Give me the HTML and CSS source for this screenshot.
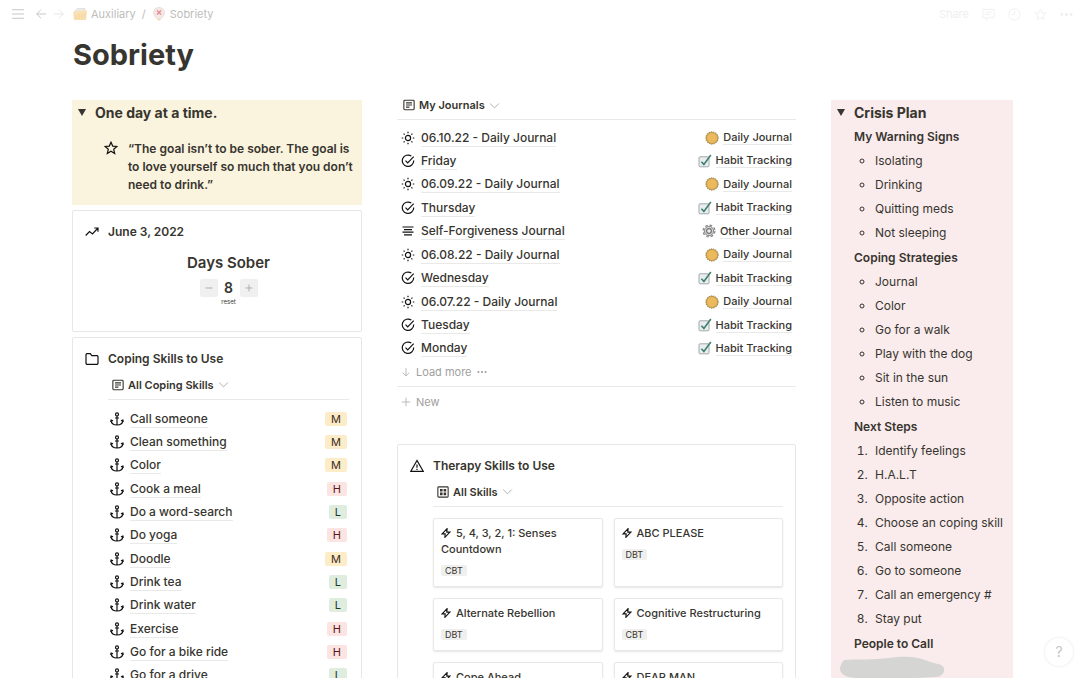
FILE: index.html
```
<!DOCTYPE html>
<html lang="en">
<head>
    <meta charset="UTF-8">
    <title>Sobriety</title>
    <link rel="stylesheet" href="styles.css">
</head>
<body>
<!-- icons -->
<svg class="defs" aria-hidden="true">
    <symbol id="i-anchor" viewBox="0 0 14 14">
        <circle cx="7" cy="2.400" r="1.500"/>
        <path d="M7 4v9M5 6h4M1 8.200c.2 3 2.600 4.700 6 4.800 3.400-.1 5.800-1.800 6-4.800M.6 9.800L1.100 8l1.900.9M13.400 9.800L12.900 8l-1.900.9"/>
    </symbol>
    <symbol id="i-sun" viewBox="0 0 14 14">
        <circle cx="7" cy="7" r="2.600"/>
        <path d="M7 .7v1.500M7 11.800v1.500M.7 7h1.500M11.800 7h1.500M2.600 2.600l1 1M10.400 10.400l1 1M2.600 11.400l1-1M10.400 3.600l1-1"/>
    </symbol>
    <symbol id="i-check" viewBox="0 0 14 14">
        <path d="M10.300 2.100A5.700 5.700 0 1 0 12.700 6.500M4.500 6.600l2.200 2.300 6-6.200"/>
    </symbol>
    <symbol id="i-lines" viewBox="0 0 14 14">
        <path d="M1.500 3h11M3 5.600h8M1.500 8.200h11M3 10.800h8"/>
    </symbol>
    <symbol id="i-bolt" viewBox="0 0 14 14">
        <path d="M8.500 1L1.500 8.200h4.300L5.500 13l7-7.200H8.200z"/>
    </symbol>
    <symbol id="i-list" viewBox="0 0 14 14">
        <rect x="1" y="1.500" width="12" height="11" rx="1"/>
        <path d="M3.500 4.500h7M3.500 7h7M3.500 9.500h4"/>
    </symbol>
    <symbol id="i-chevron" viewBox="0 0 14 14">
        <path d="M1.500 4.500L7 10l5.500-5.500"/>
    </symbol>
    <symbol id="i-star" viewBox="0 0 14 14">
        <path d="M7 1.200l1.700 3.900 4.200.4-3.200 2.800 1 4.200L7 10.300l-3.700 2.200 1-4.200L1.100 5.500l4.200-.4z"/>
    </symbol>
    <symbol id="i-day" viewBox="0 0 14 14">
        <circle cx="7" cy="7" r="6" fill="#ecb95d" stroke="#a9935f" stroke-width="1.400" stroke-dasharray="1.300 .9"/>
        <circle cx="7" cy="7" r="5.500" fill="#ecb95d" stroke="#b5924c" stroke-width=".8"/>
    </symbol>
    <symbol id="i-habit" viewBox="0 0 14 14">
        <rect x="1" y="2.800" width="10" height="10" rx="1" fill="#e9edef" stroke="#a3a8aa" stroke-width="1"/>
        <path d="M3.400 7.700l2.500 2.700L12.800 1" fill="none" stroke="#3f8070" stroke-width="1.600"/>
    </symbol>
    <symbol id="i-gear" viewBox="0 0 14 14">
        <circle cx="7" cy="7" r="5.900" fill="none" stroke="#858585" stroke-width="1.200" stroke-dasharray="2.600 2.030"/>
        <circle cx="7" cy="7" r="4.700" fill="#d2d2d2" stroke="#858585" stroke-width="1"/>
        <circle cx="7" cy="7" r="2.400" fill="#eee" stroke="#777" stroke-width="1.200"/>
    </symbol>
</svg>

<header class="topbar">
    <button class="bar-btn" aria-label="Menu"><svg viewBox="0 0 14 14"><path d="M0 2h14M0 7h14M0 12h14"/></svg></button>
    <button class="bar-btn back" aria-label="Back"><svg viewBox="0 0 14 14"><path d="M13 7H2M7 2L2 7l5 5"/></svg></button>
    <button class="bar-btn forward" aria-label="Forward"><svg viewBox="0 0 14 14"><path d="M1 7h11M7 2l5 5-5 5"/></svg></button>
    <nav class="crumbs">
        <a href="#">
            <svg viewBox="0 0 14 14"><path d="M1 5l3-3.500h8V6z" fill="#ececec" stroke="#d5d5d5" stroke-width=".6"/><path d="M0 5h3l1.500-1.500H14L13 13H1z" fill="#fae1b4"/><path d="M3 12V8M6 12V7M9 12V7M12 11V6" stroke="#f5d196" fill="none"/></svg>
            Auxiliary</a>
        <span>/</span>
        <a href="#">
            <svg viewBox="0 0 14 14"><path d="M7 13.500C4 11 1.500 8.500 1.500 5.500a5.500 5 0 0 1 11 0c0 3-2.500 5.500-5.500 8z" fill="#f3e9e6" stroke="#e3d9d8" stroke-width=".8"/><path d="M5 13l2-2 2 2z" fill="#f7dcae"/><circle cx="7" cy="5.500" r="3.600" fill="#fae5e5"/><path d="M5 3.500l4 4M9 3.500l-4 4" stroke="#df8f97" stroke-width="1.300"/></svg>
            Sobriety</a>
    </nav>
    <div class="actions">
        <button>Share</button>
        <button aria-label="Comments"><svg viewBox="0 0 14 14"><path d="M1 1.500h12v9H7l-2.500 2.500v-2.500H1zM3.500 4.500h7M3.500 7h5"/></svg></button>
        <button aria-label="Updates"><svg viewBox="0 0 14 14"><circle cx="7" cy="7" r="6"/><path d="M7 3v4H4"/></svg></button>
        <button aria-label="Favorite"><svg viewBox="0 0 14 14"><use href="#i-star"/></svg></button>
        <button aria-label="More"><svg viewBox="0 0 14 14"><path class="dots" d="M2 7h0M7 7h0M12 7h0"/></svg></button>
    </div>
</header>

<main>
    <h1>Sobriety</h1>
    <div class="columns">
        <!-- left column -->
        <div class="column">
            <details class="toggle yellow" open>
                <summary><h2>One day at a time.</h2></summary>
                <div class="quote">
                    <svg class="icon"><use href="#i-star"/></svg>
                    <p>“The goal isn’t to be sober. The goal is to love yourself so much that you don’t need to drink.”</p>
                </div>
            </details>

            <section class="callout counter">
                <svg class="icon" viewBox="0 0 14 14"><path d="M.7 10.500L4.500 6.500l3 2.500L13 3M9.300 3H13v3.700"/></svg>
                <div class="callout-body">
                    <h3>June 3, 2022</h3>
                    <h2>Days Sober</h2>
                    <div class="stepper">
                        <button aria-label="Decrease"><svg viewBox="0 0 14 14"><path d="M3 7h8"/></svg></button>
                        <output>8</output>
                        <button aria-label="Increase"><svg viewBox="0 0 14 14"><path d="M3 7h8M7 3v8"/></svg></button>
                    </div>
                    <button class="reset">reset</button>
                </div>
            </section>

            <section class="callout">
                <svg class="icon" viewBox="0 0 14 14"><path d="M1 11.500v-9l.7-.8h3.600l1.500 2h5.500l.7.8v7l-.7.8H1.700z"/></svg>
                <div class="callout-body">
                    <h3>Coping Skills to Use</h3>
                    <button class="view"><svg class="view-icon"><use href="#i-list"/></svg>All Coping Skills<svg class="chevron"><use href="#i-chevron"/></svg></button>
                    <ul class="rows skills">
                        <li><svg class="icon"><use href="#i-anchor"/></svg><a href="#">Call someone</a><span class="tag medium">M</span></li>
                        <li><svg class="icon"><use href="#i-anchor"/></svg><a href="#">Clean something</a><span class="tag medium">M</span></li>
                        <li><svg class="icon"><use href="#i-anchor"/></svg><a href="#">Color</a><span class="tag medium">M</span></li>
                        <li><svg class="icon"><use href="#i-anchor"/></svg><a href="#">Cook a meal</a><span class="tag high">H</span></li>
                        <li><svg class="icon"><use href="#i-anchor"/></svg><a href="#">Do a word-search</a><span class="tag low">L</span></li>
                        <li><svg class="icon"><use href="#i-anchor"/></svg><a href="#">Do yoga</a><span class="tag high">H</span></li>
                        <li><svg class="icon"><use href="#i-anchor"/></svg><a href="#">Doodle</a><span class="tag medium">M</span></li>
                        <li><svg class="icon"><use href="#i-anchor"/></svg><a href="#">Drink tea</a><span class="tag low">L</span></li>
                        <li><svg class="icon"><use href="#i-anchor"/></svg><a href="#">Drink water</a><span class="tag low">L</span></li>
                        <li><svg class="icon"><use href="#i-anchor"/></svg><a href="#">Exercise</a><span class="tag high">H</span></li>
                        <li><svg class="icon"><use href="#i-anchor"/></svg><a href="#">Go for a bike ride</a><span class="tag high">H</span></li>
                        <li><svg class="icon"><use href="#i-anchor"/></svg><a href="#">Go for a drive</a><span class="tag low">L</span></li>
                    </ul>
                </div>
            </section>
        </div>

        <!-- middle column -->
        <div class="column">
            <section class="journals">
                <button class="view"><svg class="view-icon"><use href="#i-list"/></svg>My Journals<svg class="chevron"><use href="#i-chevron"/></svg></button>
                <ul class="rows">
                    <li><svg class="icon"><use href="#i-sun"/></svg><a href="#">06.10.22 - Daily Journal</a><span class="relation"><svg><use href="#i-day"/></svg><a href="#">Daily Journal</a></span></li>
                    <li><svg class="icon"><use href="#i-check"/></svg><a href="#">Friday</a><span class="relation"><svg><use href="#i-habit"/></svg><a href="#">Habit Tracking</a></span></li>
                    <li><svg class="icon"><use href="#i-sun"/></svg><a href="#">06.09.22 - Daily Journal</a><span class="relation"><svg><use href="#i-day"/></svg><a href="#">Daily Journal</a></span></li>
                    <li><svg class="icon"><use href="#i-check"/></svg><a href="#">Thursday</a><span class="relation"><svg><use href="#i-habit"/></svg><a href="#">Habit Tracking</a></span></li>
                    <li><svg class="icon"><use href="#i-lines"/></svg><a href="#">Self-Forgiveness Journal</a><span class="relation"><svg><use href="#i-gear"/></svg><a href="#">Other Journal</a></span></li>
                    <li><svg class="icon"><use href="#i-sun"/></svg><a href="#">06.08.22 - Daily Journal</a><span class="relation"><svg><use href="#i-day"/></svg><a href="#">Daily Journal</a></span></li>
                    <li><svg class="icon"><use href="#i-check"/></svg><a href="#">Wednesday</a><span class="relation"><svg><use href="#i-habit"/></svg><a href="#">Habit Tracking</a></span></li>
                    <li><svg class="icon"><use href="#i-sun"/></svg><a href="#">06.07.22 - Daily Journal</a><span class="relation"><svg><use href="#i-day"/></svg><a href="#">Daily Journal</a></span></li>
                    <li><svg class="icon"><use href="#i-check"/></svg><a href="#">Tuesday</a><span class="relation"><svg><use href="#i-habit"/></svg><a href="#">Habit Tracking</a></span></li>
                    <li><svg class="icon"><use href="#i-check"/></svg><a href="#">Monday</a><span class="relation"><svg><use href="#i-habit"/></svg><a href="#">Habit Tracking</a></span></li>
                </ul>
                <button class="more"><svg viewBox="0 0 14 14"><path d="M7 1.500v11M2.500 8L7 12.500 11.500 8"/></svg>Load more<svg viewBox="0 0 14 14"><path class="dots" d="M2 7h0M7 7h0M12 7h0"/></svg></button>
                <button class="more new"><svg viewBox="0 0 14 14"><path d="M7 1v12M1 7h12"/></svg>New</button>
            </section>

            <section class="callout">
                <svg class="icon" viewBox="0 0 14 14"><path d="M7 1.500L.8 12.300h12.400zM7 5.500v3.200M7 9.800v1.200"/></svg>
                <div class="callout-body">
                    <h3>Therapy Skills to Use</h3>
                    <button class="view"><svg class="view-icon" viewBox="0 0 14 14"><rect x="1" y="1" width="12" height="12" rx="1"/><path class="solid" d="M3.500 3.500h3v3h-3zM7.700 3.500h3v3h-3zM3.500 7.700h3v3h-3zM7.700 7.700h3v3h-3z"/></svg>All Skills<svg class="chevron"><use href="#i-chevron"/></svg></button>
                    <div class="gallery">
                        <article>
                            <h4><svg><use href="#i-bolt"/></svg>5, 4, 3, 2, 1: Senses Countdown</h4>
                            <span class="type">CBT</span>
                        </article>
                        <article>
                            <h4><svg><use href="#i-bolt"/></svg>ABC PLEASE</h4>
                            <span class="type">DBT</span>
                        </article>
                        <article>
                            <h4><svg><use href="#i-bolt"/></svg>Alternate Rebellion</h4>
                            <span class="type">DBT</span>
                        </article>
                        <article>
                            <h4><svg><use href="#i-bolt"/></svg>Cognitive Restructuring</h4>
                            <span class="type">CBT</span>
                        </article>
                        <article>
                            <h4><svg><use href="#i-bolt"/></svg>Cope Ahead</h4>
                        </article>
                        <article>
                            <h4><svg><use href="#i-bolt"/></svg>DEAR MAN</h4>
                        </article>
                    </div>
                </div>
            </section>
        </div>

        <!-- right column -->
        <div class="column">
            <details class="toggle red" open>
                <summary><h2>Crisis Plan</h2></summary>
                <div class="plan">
                    <h4>My Warning Signs</h4>
                    <ul>
                        <li>Isolating</li>
                        <li>Drinking</li>
                        <li>Quitting meds</li>
                        <li>Not sleeping</li>
                    </ul>
                    <h4>Coping Strategies</h4>
                    <ul>
                        <li>Journal</li>
                        <li>Color</li>
                        <li>Go for a walk</li>
                        <li>Play with the dog</li>
                        <li>Sit in the sun</li>
                        <li>Listen to music</li>
                    </ul>
                    <h4>Next Steps</h4>
                    <ol>
                        <li>Identify feelings</li>
                        <li>H.A.L.T</li>
                        <li>Opposite action</li>
                        <li>Choose an coping skill</li>
                        <li>Call someone</li>
                        <li>Go to someone</li>
                        <li>Call an emergency #</li>
                        <li>Stay put</li>
                    </ol>
                    <h4>People to Call</h4>
                </div>
                <svg class="smudge" viewBox="0 0 106 24"><path d="M5 4C20 3 35 4 50 2c12-2 26-2 36 2 8 4 17 3 19 8 1 5-3 9-8 9-25 2-55 1-80 1C8 22 1 18 1 13c0-3 2-7 4-9z"/></svg>
            </details>
        </div>
    </div>
</main>
<button class="help" aria-label="Help">?</button>
</body>
</html>
```
FILE: styles.css
```
* {
    box-sizing: border-box;
    margin: 0;
    padding: 0;
}

body {
    height: 100vh;
    overflow: hidden;
    position: relative;
    font: 12px/18px Inter, "Liberation Sans", sans-serif;
    color: #37352f;
    background: #fff;
}

ul {
    list-style: none;
}

a {
    color: inherit;
    text-decoration: none;
}

button {
    font: inherit;
    color: inherit;
    border: 0;
    background: none;
    cursor: pointer;
}

svg {
    display: block;
    flex: none;
    width: 14px;
    height: 14px;
    fill: none;
    stroke: currentColor;
}

.defs {
    position: absolute;
    width: 0;
    height: 0;
}

.icon {
    color: #111;
    stroke-width: 1.2;
}

.dots {
    stroke-width: 3;
    stroke-linecap: round;
}

.solid {
    fill: currentColor;
    stroke: none;
}

/* top bar */
.topbar {
    display: flex;
    align-items: center;
    height: 28px;
    padding: 0 12px;
    font-size: 11px;
    color: #bdbdbb;
}

.bar-btn svg {
    width: 12px;
    height: 12px;
}

.back {
    margin-left: 11px;
}

.forward {
    margin: 0 8px 0 6px;
    color: #e2e2e2;
}

.crumbs {
    display: flex;
    gap: 6px;
}

.crumbs a {
    display: flex;
    align-items: center;
    gap: 4px;
}

.crumbs svg {
    stroke: none;
}

.actions {
    display: flex;
    align-items: center;
    gap: 13px;
    margin-left: auto;
    color: #efefef;
}

.actions svg {
    width: 13px;
    height: 13px;
}

/* page */
main {
    padding: 8px 72px 0;
}

h1 {
    margin-bottom: 26px;
    padding-left: 1px;
    font-size: 29px;
    line-height: 38px;
    font-weight: 700;
}

.columns {
    display: grid;
    grid-template-columns: 290fr 399fr 182fr;
    gap: 35px;
    align-items: start;
}

.column {
    display: flex;
    flex-direction: column;
    gap: 5px;
    min-width: 0;
}

h2 {
    font-size: 15px;
    font-weight: 600;
    line-height: 25px;
}

h3 {
    font-size: 12px;
    font-weight: 600;
    line-height: 18px;
}

/* toggles */
.toggle summary {
    display: flex;
    align-items: center;
    gap: 9px;
    padding-left: 6px;
    list-style: none;
    cursor: pointer;
}

.toggle summary::before {
    content: "";
    border: 4px solid transparent;
    border-top: 7px solid #37352f;
    border-bottom: 0;
}

.toggle h2 {
    font-size: 14px;
    font-weight: 700;
}

.yellow {
    padding-bottom: 11px;
    background: #faf3dd;
}

.red {
    padding-bottom: 20px;
    background: #faebec;
}

.quote {
    display: flex;
    gap: 10px;
    padding: 15px 4px 0 32px;
    font-weight: 600;
}

.quote .icon {
    margin-top: 1px;
}

/* bordered callouts */
.callout {
    display: flex;
    gap: 9px;
    padding: 12px;
    border: 1px solid #e7e7e5;
    border-radius: 2px;
}

.callout > .icon {
    margin-top: 2px;
}

.callout-body {
    flex: 1;
    min-width: 0;
}

.counter {
    min-height: 122px;
}

.counter h2 {
    margin-top: 9px;
    text-align: center;
}

.stepper {
    display: flex;
    justify-content: center;
    align-items: center;
    margin-top: 4px;
}

.stepper button {
    padding: 3px;
    border-radius: 2px;
    background: #f0f0f0;
    color: #a5a5a3;
}

.stepper svg {
    width: 12px;
    height: 12px;
}

.stepper output {
    width: 22px;
    font-size: 14px;
    font-weight: 600;
    text-align: center;
}

.reset {
    display: block;
    margin: 1px auto 0;
    font-size: 6px;
    line-height: 8px;
}

/* database views */
.view {
    display: flex;
    align-items: center;
    gap: 4px;
    width: 100%;
    height: 32px;
    padding: 2px 4px 0;
    border-bottom: 1px solid #e9e9e7;
    font-size: 11px;
    font-weight: 600;
}

.view-icon {
    width: 12px;
    height: 12px;
    stroke-width: 1.3;
}

.chevron {
    width: 11px;
    height: 11px;
    color: #9b9a97;
}

.rows {
    display: flex;
    flex-direction: column;
    justify-content: space-between;
    padding: 7px 2px 0;
    font-weight: 500;
}

.rows li {
    display: flex;
    align-items: center;
    height: 23px;
}

.rows a {
    line-height: 17px;
    border-bottom: 1px solid #e9e9e7;
}

.rows .icon {
    margin-right: 6px;
}

.skills {
    min-height: 287px;
}

.tag {
    margin-left: auto;
    padding: 0 6px;
    border-radius: 2px;
    font-size: 11px;
    font-weight: 400;
    line-height: 14px;
}

.medium {
    background: #fdecc8;
    color: #402c1b;
}

.high {
    background: #fbe4e1;
    color: #5d1715;
}

.low {
    background: #dfeddf;
    color: #1c3829;
}

.journals {
    margin-bottom: 22px;
}

.journals .view {
    height: 20px;
    padding: 0 6px 9px;
}

.journals .rows {
    min-height: 240px;
    padding: 6px 4px 0;
}

.relation {
    display: flex;
    gap: 4px;
    align-items: center;
    margin-left: auto;
    font-size: 11px;
}

.relation a {
    line-height: 14px;
}

.more {
    display: flex;
    align-items: center;
    gap: 5px;
    width: 100%;
    height: 27px;
    padding: 0 4px 2px;
    border-bottom: 1px solid #e9e9e7;
    font-size: 11px;
    color: #a0a09d;
}

.more svg {
    width: 10px;
    height: 10px;
}

.new {
    height: 30px;
    padding: 0 4px;
    border-bottom: 0;
}

/* gallery cards */
.gallery {
    display: grid;
    grid-template-columns: 1fr 1fr;
    gap: 11px;
    padding-top: 11px;
}

.gallery article {
    min-height: 53px;
    padding: 6px 7px 10px;
    border: 1px solid #e8e8e7;
    border-radius: 2px;
    box-shadow: 0 1px 2px #e6e6e5;
}

h4 {
    font-size: 11px;
    font-weight: 500;
    line-height: 16px;
}

.gallery svg {
    display: inline-block;
    width: 10px;
    height: 10px;
    margin-right: 5px;
    vertical-align: -1px;
    color: #111;
    stroke-width: 1.6;
}

.type {
    display: block;
    width: max-content;
    margin-top: 8px;
    padding: 0 4px;
    border-radius: 2px;
    background: #efefee;
    font-size: 9px;
    line-height: 11px;
}

/* crisis plan */
.plan {
    padding-left: 23px;
    line-height: 24px;
}

.plan h4 {
    font-size: 12px;
    font-weight: 600;
    line-height: 24px;
}

.plan ul,
.plan ol {
    margin-bottom: 1px;
}

.plan ul {
    padding-left: 21px;
    list-style: circle;
}

.plan ol {
    padding-left: 17px;
}

.plan ol li {
    padding-left: 4px;
}

.smudge {
    width: 106px;
    height: 24px;
    margin-left: 8px;
    fill: #d5d5d3;
    stroke: none;
}

.help {
    position: absolute;
    right: 12px;
    bottom: 12px;
    width: 28px;
    height: 28px;
    border-radius: 50%;
    background: #fff;
    box-shadow: 0 0 3px #e2e2e2;
    font-size: 14px;
    color: #c4c4c2;
}
```
